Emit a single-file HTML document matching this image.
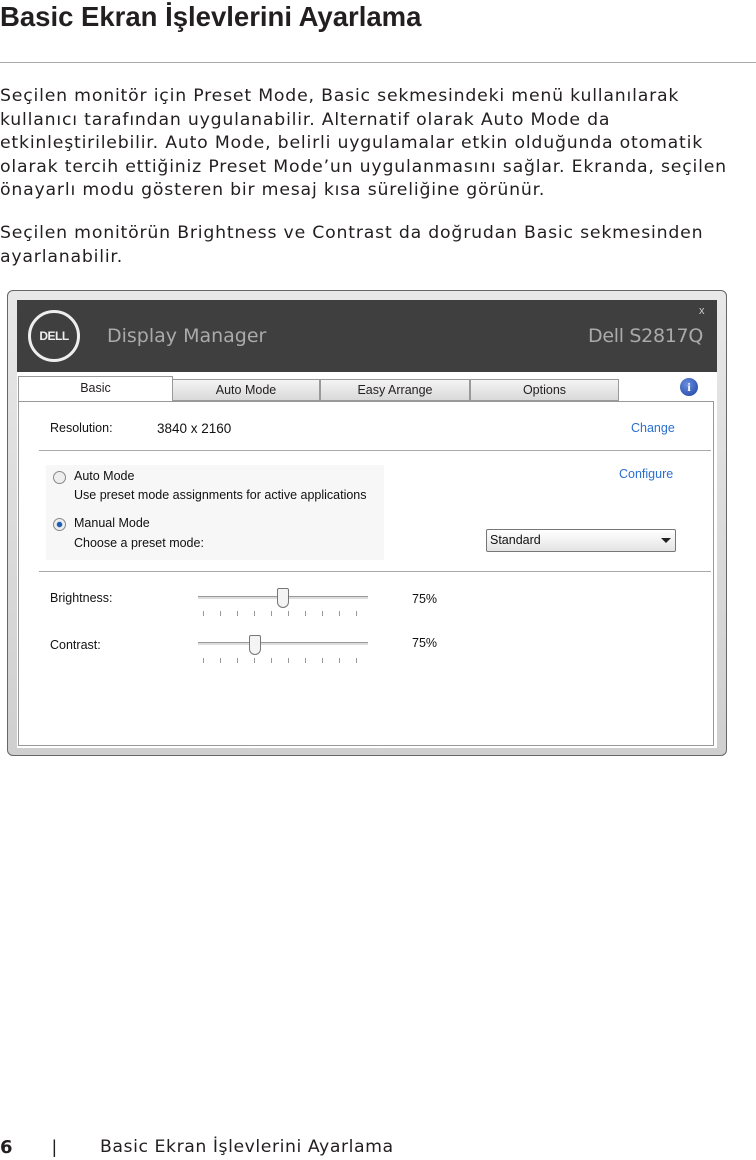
<!DOCTYPE html><html><head><meta charset="utf-8"><style>
*{margin:0;padding:0;box-sizing:border-box}
body{width:756px;height:1160px;background:#fff;position:relative;font-family:"Liberation Sans",sans-serif;color:#231f20;overflow:hidden}
.a{position:absolute;white-space:nowrap}
h1{position:absolute;left:0;top:1px;font-size:27.5px;font-weight:bold;color:#231f20}
.p{position:absolute;left:0;font-family:"DejaVu Sans",sans-serif;font-size:17.3px;line-height:23.5px;width:756px;color:#231f20;letter-spacing:0.8px}
.w{font-family:"Liberation Sans",sans-serif;font-size:12.5px;color:#111}
.tab{position:absolute;top:379px;height:22px;background:linear-gradient(#f4f4f4,#d9d9d9);border:1px solid #999;font-family:"Liberation Sans";font-size:12.5px;text-align:center;line-height:20px}
.tk{position:absolute;width:1px;height:5px;background:#999}
</style></head><body>
<h1>Basic Ekran İşlevlerini Ayarlama</h1>
<div class="a" style="left:0;top:62px;width:756px;height:1px;background:#aaa"></div>
<div class="p" style="top:85px">Seçilen monitör için Preset Mode, Basic sekmesindeki menü kullanılarak<br>kullanıcı tarafından uygulanabilir. Alternatif olarak Auto Mode da<br>etkinleştirilebilir. Auto Mode, belirli uygulamalar etkin olduğunda otomatik<br>olarak tercih ettiğiniz Preset Mode’un uygulanmasını sağlar. Ekranda, seçilen<br>önayarlı modu gösteren bir mesaj kısa süreliğine görünür.</div>
<div class="p" style="top:222px">Seçilen monitörün Brightness ve Contrast da doğrudan Basic sekmesinden<br>ayarlanabilir.</div>

<div class="a" style="left:7px;top:290px;width:720px;height:466px;background:linear-gradient(#e8e8e8,#cfcfcf);border:1px solid #666;border-radius:6px"></div>
<div class="a" style="left:17px;top:300px;width:700px;height:72px;background:#3f3f3f"></div>
<div class="a" style="left:28px;top:310px;width:52px;height:52px;border:3px solid #eee;border-radius:50%;color:#eee;font-weight:bold;font-size:12px;text-align:center;line-height:46px;letter-spacing:-0.5px">DELL</div>
<div class="a" style="left:107px;top:325px;font-size:19px;color:#aaa;font-family:'DejaVu Sans'">Display Manager</div>
<div class="a" style="left:588px;top:325px;font-size:19px;color:#aaa;font-family:'DejaVu Sans';letter-spacing:-0.3px">Dell S2817Q</div>
<div class="a" style="left:699px;top:305px;font-size:11px;color:#ccc">x</div>
<div class="a" style="left:17px;top:372px;width:700px;height:376px;background:#fff"></div>
<div class="tab" style="left:172px;width:148px">Auto Mode</div>
<div class="tab" style="left:320px;width:150px">Easy Arrange</div>
<div class="tab" style="left:470px;width:149px">Options</div>
<div class="tab" style="left:18px;top:376px;width:155px;height:27px;background:#fff;border-bottom:none;line-height:22px">Basic</div>
<div class="a" style="left:680px;top:378px;width:18px;height:18px;border-radius:50%;background:radial-gradient(circle at 40% 35%,#6a8fe0,#1a3fa0);color:#fff;font-weight:bold;font-size:12px;text-align:center;line-height:18px;font-family:'Liberation Serif'">i</div>
<div class="a" style="left:18px;top:401px;width:696px;height:345px;border:1px solid #999;background:#fff"></div>
<div class="a w" style="left:50px;top:421px">Resolution:</div>
<div class="a w" style="left:157px;top:421px;font-size:13.5px">3840 x 2160</div>
<div class="a w" style="left:631px;top:421px;color:#2a6fd0">Change</div>
<div class="a" style="left:39px;top:450px;width:672px;height:1px;background:#aaa"></div>
<div class="a" style="left:46px;top:465px;width:338px;height:95px;background:#f7f7f7"></div>
<div class="a" style="left:53px;top:471px;width:13px;height:13px;border-radius:50%;border:1px solid #888;background:#eee"></div>
<div class="a w" style="left:74px;top:469px">Auto Mode</div>
<div class="a w" style="left:74px;top:488px">Use preset mode assignments for active applications</div>
<div class="a" style="left:53px;top:518px;width:13px;height:13px;border-radius:50%;border:1px solid #888;background:radial-gradient(#1a5fb0 30%,#eee 40%)"></div>
<div class="a w" style="left:74px;top:516px">Manual Mode</div>
<div class="a w" style="left:74px;top:536px">Choose a preset mode:</div>
<div class="a w" style="left:619px;top:467px;color:#2a6fd0">Configure</div>
<div class="a" style="left:486px;top:529px;width:190px;height:23px;border:1px solid #777;background:linear-gradient(#fff,#e4e4e4);border-radius:2px"></div>
<div class="a w" style="left:490px;top:533px">Standard</div>
<div class="a" style="left:661px;top:538px;width:0;height:0;border-left:5px solid transparent;border-right:5px solid transparent;border-top:5px solid #222"></div>
<div class="a" style="left:39px;top:571px;width:672px;height:1px;background:#aaa"></div>
<div class="a w" style="left:50px;top:591px">Brightness:</div>
<div class="a w" style="left:412px;top:592px">75%</div>
<div class="a" style="left:198px;top:596px;width:170px;height:3px;background:#ddd;border-top:1px solid #999"></div>
<div class="a" style="left:277px;top:588px;width:12px;height:20px;background:#f4f4f4;border:1px solid #777;border-radius:2px 2px 6px 6px"></div>
<div class="a w" style="left:50px;top:638px">Contrast:</div>
<div class="a w" style="left:412px;top:636px">75%</div>
<div class="a" style="left:198px;top:642px;width:170px;height:3px;background:#ddd;border-top:1px solid #999"></div>
<div class="a" style="left:249px;top:635px;width:12px;height:20px;background:#f4f4f4;border:1px solid #777;border-radius:2px 2px 6px 6px"></div>
<div class="tk" style="left:203px;top:611px"></div><div class="tk" style="left:220px;top:611px"></div><div class="tk" style="left:237px;top:611px"></div><div class="tk" style="left:254px;top:611px"></div><div class="tk" style="left:271px;top:611px"></div><div class="tk" style="left:288px;top:611px"></div><div class="tk" style="left:305px;top:611px"></div><div class="tk" style="left:322px;top:611px"></div><div class="tk" style="left:339px;top:611px"></div><div class="tk" style="left:356px;top:611px"></div>
<div class="tk" style="left:203px;top:658px"></div><div class="tk" style="left:220px;top:658px"></div><div class="tk" style="left:237px;top:658px"></div><div class="tk" style="left:254px;top:658px"></div><div class="tk" style="left:271px;top:658px"></div><div class="tk" style="left:288px;top:658px"></div><div class="tk" style="left:305px;top:658px"></div><div class="tk" style="left:322px;top:658px"></div><div class="tk" style="left:339px;top:658px"></div><div class="tk" style="left:356px;top:658px"></div>

<div class="a" style="left:0;top:1137px;font-size:18px;font-family:'DejaVu Sans'"><b>6</b></div>
<div class="a" style="left:52px;top:1137px;font-size:18px">|</div>
<div class="a" style="left:100px;top:1137px;font-size:17.3px;font-family:'DejaVu Sans';letter-spacing:0.55px">Basic Ekran İşlevlerini Ayarlama</div>
</body></html>
